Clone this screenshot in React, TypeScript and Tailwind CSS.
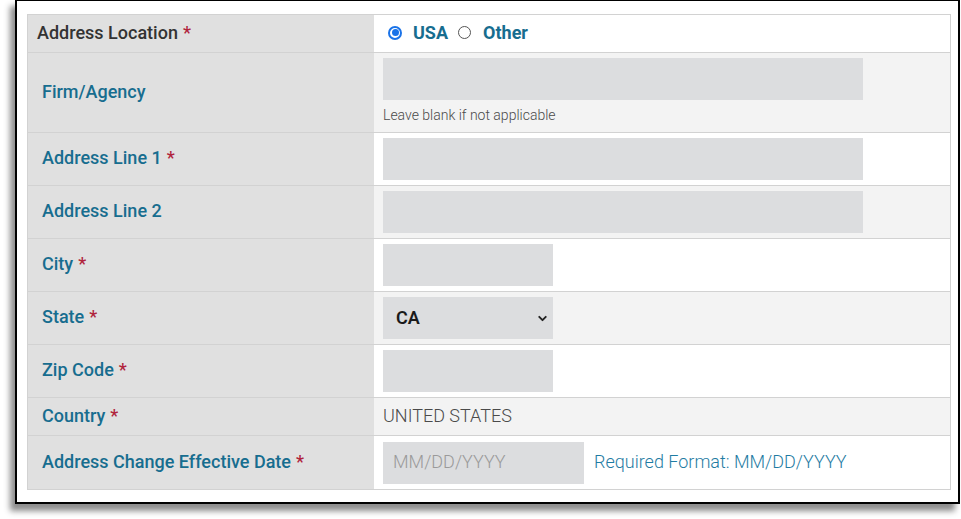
import { ChevronDown } from "lucide-react";

const font = { fontFamily: "Roboto, 'Liberation Sans', sans-serif" };

const Req = () => <span className="ml-[5px] text-[#b0243c]">*</span>;

type Row = {
  label: string;
  required?: boolean;
  children: React.ReactNode;
};

const Field = ({ w }: { w: string }) => <div className={`h-[42px] bg-[#dcdddf] ${w}`} />;

const rows: Row[] = [
  {
    label: "Firm/Agency",
    children: (
      <div className="flex flex-col self-start pt-[5px]">
        <Field w="w-[480px]" />
        <p className="mt-[5px] text-[14px] font-light text-[#4a4a4a]">Leave blank if not applicable</p>
      </div>
    ),
  },
  { label: "Address Line 1", required: true, children: <Field w="w-[480px]" /> },
  { label: "Address Line 2", children: <Field w="w-[480px]" /> },
  { label: "City", required: true, children: <Field w="w-[170px]" /> },
  {
    label: "State",
    required: true,
    children: (
      <div className="flex h-[42px] w-[170px] items-center justify-between bg-[#dcdddf] pl-[13px] pr-[4px]">
        <span className="pb-[2px] text-[18px] font-semibold text-[#1a1a1a]">CA</span>
        <ChevronDown className="h-[13px] w-[13px] text-[#222]" strokeWidth={3.5} />
      </div>
    ),
  },
  { label: "Zip Code", required: true, children: <Field w="w-[170px]" /> },
  {
    label: "Country",
    required: true,
    children: <span className="pb-[2px] text-[18px] font-light text-[#4a4a4a]">UNITED STATES</span>,
  },
  {
    label: "Address Change Effective Date",
    required: true,
    children: (
      <div className="flex items-center gap-[10px]">
        <div className="flex h-[42px] w-[201px] items-center bg-[#dcdddf] pb-[2px] pl-[10px] text-[18px] font-light text-[#9a9a9a]">
          MM/DD/YYYY
        </div>
        <span className="pb-[2px] text-[18px] font-light text-[#1f7ca3]">Required Format: MM/DD/YYYY</span>
      </div>
    ),
  },
];

export default function App() {
  return (
    <div className="h-[519px] w-[961px] bg-white" style={font}>
      <div className="ml-[15px] -mt-px h-[505px] w-[945px] border-2 border-black bg-white px-[10px] pt-[13px] shadow-[-5px_7px_6px_rgba(0,0,0,0.45)]">
        <div className="w-[924px] border border-[#d2d2d2]">
          <div className="flex h-[38px] border-b border-[#d2d2d2]">
            <div className="flex w-[346px] items-center bg-[#e0e0e0] pb-[2px] pl-[9px] text-[18px] font-medium text-[#333]">
              <span>Address Location</span>
              <Req />
            </div>
            <div className="flex flex-1 items-center bg-white pb-[2px] pl-[14px]">
              <span className="flex h-[14px] w-[14px] items-center justify-center rounded-full border-2 border-[#1a73e8]">
                <span className="h-[7px] w-[7px] rounded-full bg-[#1a73e8]" />
              </span>
              <span className="ml-[11px] text-[18px] font-bold text-[#176d8f]">USA</span>
              <span className="ml-[10px] h-[13px] w-[13px] rounded-full border border-[#555]" />
              <span className="ml-[12px] text-[18px] font-bold text-[#176d8f]">Other</span>
            </div>
          </div>
          {rows.map((r, i) => {
            const h = i === 0 ? "h-[80px]" : r.label === "Country" ? "h-[38px]" : "h-[53px]";
            const bg = i % 2 === 0 ? "bg-[#f3f3f3]" : "bg-white";
            const last = i === rows.length - 1;
            return (
              <div key={r.label} className={`flex ${h} ${last ? "" : "border-b border-[#d2d2d2]"}`}>
                <div className="flex w-[346px] items-center bg-[#e0e0e0] pb-[3px] pl-[14px] text-[18px] font-medium text-[#176d8f]">
                  <span>{r.label}</span>
                  {r.required && <Req />}
                </div>
                <div className={`flex flex-1 items-center pl-[9px] ${bg}`}>{r.children}</div>
              </div>
            );
          })}
        </div>
      </div>
    </div>
  );
}
